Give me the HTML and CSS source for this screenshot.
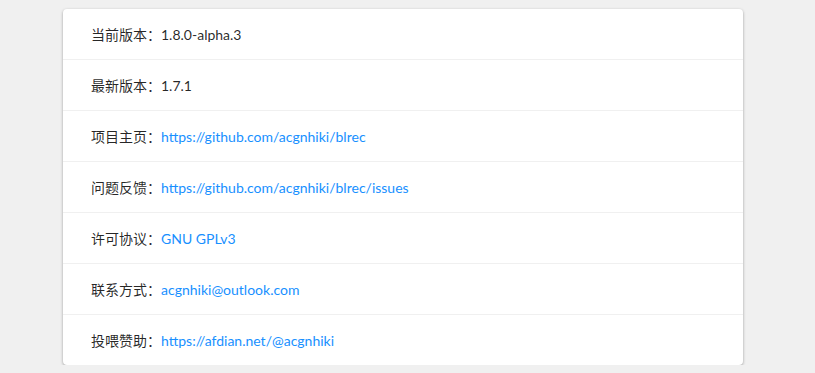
FILE: index.html
```html
<!DOCTYPE html>
<html lang="zh-CN">

<head>
    <meta charset="UTF-8">
    <meta name="viewport" content="width=device-width, initial-scale=1.0">
    <title>关于</title>
    <link rel="stylesheet" href="styles.css">
</head>

<body>

    <div class="about-card">
        <div class="info-row">
            <span class="info-label">当前版本：</span><span class="info-value">1.8.0-alpha.3</span>
        </div>
        <div class="info-row">
            <span class="info-label">最新版本：</span><span class="info-value">1.7.1</span>
        </div>
        <div class="info-row">
            <span class="info-label">项目主页：</span><a href="#">https://github.com/acgnhiki/blrec</a>
        </div>
        <div class="info-row">
            <span class="info-label">问题反馈：</span><a href="#">https://github.com/acgnhiki/blrec/issues</a>
        </div>
        <div class="info-row">
            <span class="info-label">许可协议：</span><a href="#">GNU GPLv3</a>
        </div>
        <div class="info-row">
            <span class="info-label">联系方式：</span><a href="#">acgnhiki@outlook.com</a>
        </div>
        <div class="info-row">
            <span class="info-label">投喂赞助：</span><a href="#">https://afdian.net/@acgnhiki</a>
        </div>
    </div>

</body>

</html>
```

FILE: styles.css
```css
body {
    font-family: Lato, "Noto Sans CJK SC", sans-serif;
    font-size: 14px;
    margin: 0;
    padding: 9px 0 0 63px;
    background-color: #f0f0f0;
    color: rgba(0, 0, 0, 0.85);
}

.about-card {
    width: 680px;
    background-color: #ffffff;
    border-radius: 4px;
    box-shadow: 0 1px 3px rgba(0, 0, 0, 0.35);
}

.info-row {
    height: 50px;
    display: flex;
    align-items: center;
    padding: 0 28px;
    border-bottom: 1px solid #f0f0f0;
}

.info-row:last-child {
    border-bottom: none;
}

.info-row a {
    color: #1890ff;
    text-decoration: none;
}
```
